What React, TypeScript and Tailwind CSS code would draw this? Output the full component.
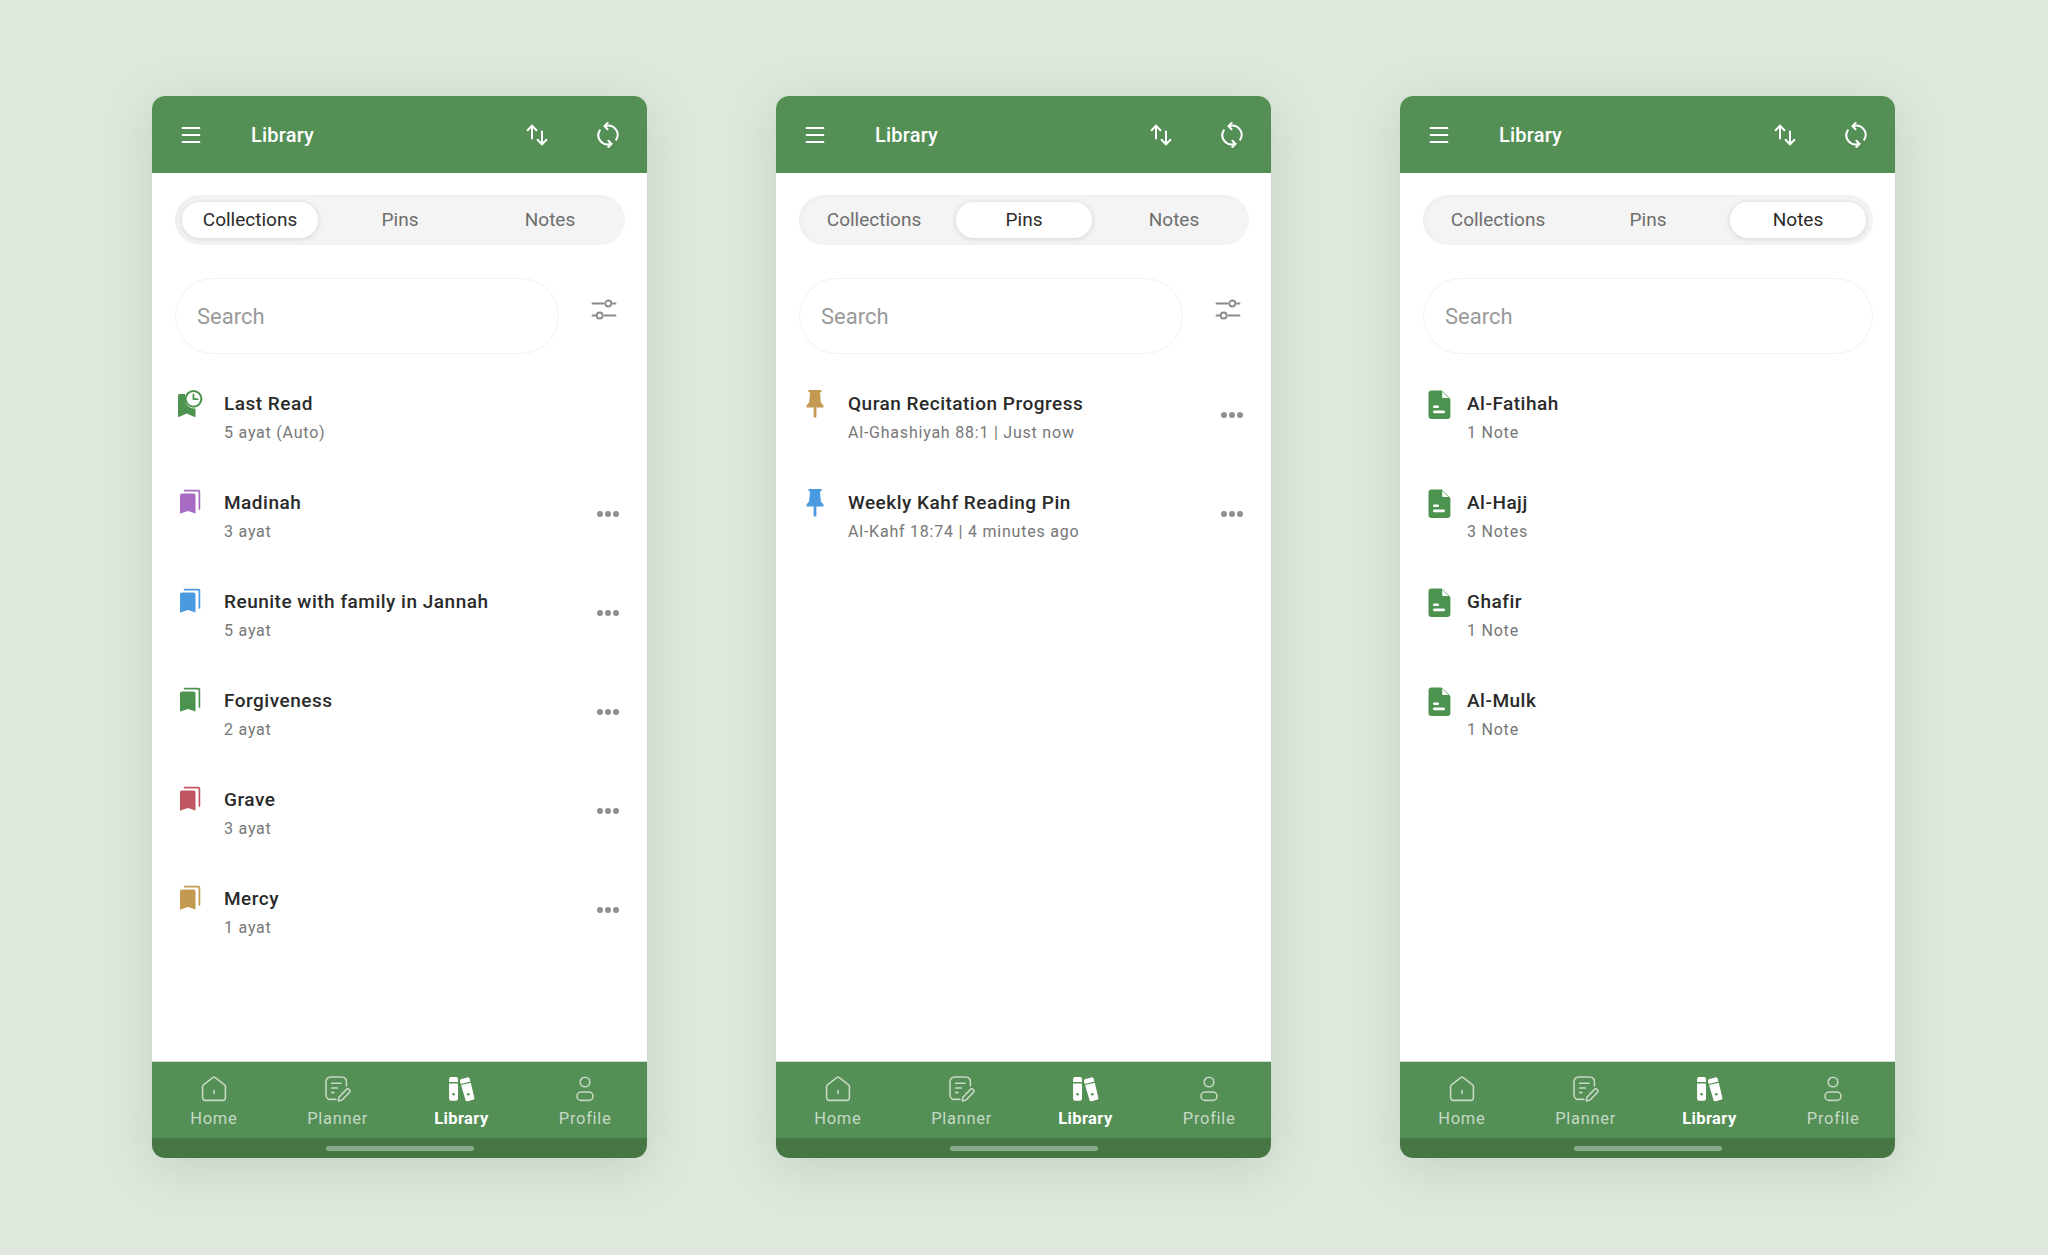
import React from "react";

type Item = { title: string; sub: string; icon: React.ReactNode; more?: boolean };

const Bookmarks = ({ color }: { color: string }) => (
  <svg width="22" height="26" viewBox="0 0 22 26" fill="none">
    <path d="M5.5 1.6H19.4a1 1 0 0 1 1 1V20" stroke={color} strokeWidth="1.7" strokeLinecap="round" />
    <path d="M1 6.5a2 2 0 0 1 2-2h11.5a2 2 0 0 1 2 2V24.6L9 22 1.4 24.6a.3.3 0 0 1-.4-.3Z" fill={color} />
  </svg>
);

const LastRead = () => (
  <svg className="-mt-[1px] -ml-[2px]" width="26" height="29" viewBox="0 0 26 29" fill="none">
    <path d="M1 6.5a1.5 1.5 0 0 1 1.5-1.5H8v6a9 9 0 0 0 10.5 8.4V27.5a.6.6 0 0 1-.9.4L9.8 24.5 1.8 28a.6.6 0 0 1-.8-.5Z" fill="#4d9350" />
    <circle cx="16.5" cy="9.8" r="7.9" stroke="#4d9350" strokeWidth="2" fill="#fff" />
    <path d="M16.5 5.4v4.8h4" stroke="#4d9350" strokeWidth="1.8" strokeLinecap="round" strokeLinejoin="round" />
  </svg>
);

const Pin = ({ color }: { color: string }) => (
  <svg className="-mt-[1px]" width="18" height="29" viewBox="0 0 18 29" fill="none">
    <path d="M2.5 1h13v2.2h-1.6l1 10.3 2.6 3v2H0.5v-2l2.6-3 1-10.3H2.5Z" fill={color} />
    <rect x="7.6" y="18" width="2.8" height="10.5" rx="1" fill={color} />
  </svg>
);

const Doc = () => (
  <svg width="23" height="29" viewBox="0 0 23 29" fill="none">
    <path d="M3.5.6h9.9a1 1 0 0 1 .7.3l8 7.9a1 1 0 0 1 .3.7v16.4a3 3 0 0 1-3 3H3.5a3 3 0 0 1-3-3V3.6a3 3 0 0 1 3-3Z" fill="#4d9350" />
    <path d="M14.2 1.8v5.1a1.2 1.2 0 0 0 1.2 1.2h5.2Z" fill="#fff" />
    <rect x="5" y="15.4" width="6" height="2.6" rx="1.2" fill="#fff" />
    <rect x="5" y="20.6" width="12" height="2.6" rx="1.2" fill="#fff" />
  </svg>
);

const Dots = () => (
  <svg width="24" height="8" viewBox="0 0 24 8" fill="#8f8f8f">
    <circle cx="4" cy="4" r="3" />
    <circle cx="12" cy="4" r="3" />
    <circle cx="20" cy="4" r="3" />
  </svg>
);

const Menu = () => (
  <svg width="20" height="18" viewBox="0 0 20 18" fill="none" stroke="#fff" strokeWidth="1.8" strokeLinecap="round">
    <path d="M1.5 2h17M1.5 9h17M1.5 16h17" />
  </svg>
);

const Sort = () => (
  <svg width="24" height="22" viewBox="0 0 24 22" fill="none" stroke="#fff" strokeWidth="2" strokeLinecap="round" strokeLinejoin="round">
    <path d="M7 14.5V2M2.6 6.3 7 1.6l4.4 4.7" />
    <path d="M17 7.5V20M12.6 15.7 17 20.4l4.4-4.7" />
  </svg>
);

const Refresh = () => (
  <svg width="24" height="26" viewBox="0 0 24 26" fill="none" stroke="#fff" strokeWidth="2" strokeLinecap="round" strokeLinejoin="round">
    <path d="M9 4.2A9.2 9.2 0 0 1 20.2 17.6" />
    <path d="M15 21.8A9.2 9.2 0 0 1 3.8 8.4" />
    <path d="M11.6 1 8.4 4.1l3.2 3.1" />
    <path d="M12.4 25l3.2-3.1-3.2-3.1" />
  </svg>
);

const Filter = () => (
  <svg width="26" height="22" viewBox="0 0 26 22" fill="none" stroke="#8a8a8a" strokeWidth="1.8" strokeLinecap="round">
    <path d="M1.5 5.5h11M21.5 5.5h3" />
    <circle cx="17.3" cy="5.5" r="3" />
    <path d="M1.5 17.5h3M13.5 17.5h11" />
    <circle cx="8.7" cy="17.5" r="3" />
  </svg>
);

const Home = () => (
  <svg width="28" height="28" viewBox="0 0 28 28" fill="none" stroke="currentColor" strokeWidth="1.6" strokeLinecap="round" strokeLinejoin="round">
    <path d="M2.6 11.3a2 2 0 0 1 .8-1.5L12.8 2.6a2 2 0 0 1 2.4 0l9.4 7.2a2 2 0 0 1 .8 1.5V23a2.6 2.6 0 0 1-2.6 2.4H5.2A2.6 2.6 0 0 1 2.6 23Z" />
    <path d="M14 15.5v3" />
  </svg>
);

const Planner = () => (
  <svg width="28" height="28" viewBox="0 0 28 28" fill="none" stroke="currentColor" strokeWidth="1.6" strokeLinecap="round" strokeLinejoin="round">
    <path d="M12 24.4H6.5A4.5 4.5 0 0 1 2 20V6.5A4.5 4.5 0 0 1 6.5 2h11.4a4.5 4.5 0 0 1 4.5 4.5V11" />
    <path d="M7.5 8.2h9.5M7.5 13h6M7.5 17.6h2.5" />
    <path d="M15 22.2 22.2 14.6a2.1 2.1 0 0 1 3.1 2.9L18 25.1l-3.6 1Z" />
  </svg>
);

const Books = () => (
  <svg width="27" height="26" viewBox="0 0 30 28.5" fill="#fff">
    <path d="M3.2 1h5.9a2 2 0 0 1 2 2v3.6H1.2V3a2 2 0 0 1 2-2Z" />
    <path d="M1.2 8.2h9.9v17a2 2 0 0 1-2 2H3.2a2 2 0 0 1-2-2Z" />
    <path d="M14.2 3.4 21.6 1.4a2 2 0 0 1 2.4 1.3l.9 3.1-10.6 2.9-.9-2.9a2 2 0 0 1 .8-2.4Z" />
    <path d="M14.6 9.9 25.3 7.2 29.3 23.9a2 2 0 0 1-1.5 2.4l-6.1 1.5a2 2 0 0 1-2.4-1.5Z" />
    <circle cx="6.2" cy="20.2" r="1.4" fill="#548f56" />
    <circle cx="22.6" cy="20.2" r="1.4" fill="#548f56" />
  </svg>
);

const Profile = () => (
  <svg width="28" height="28" viewBox="0 0 28 28" fill="none" stroke="currentColor" strokeWidth="1.6">
    <circle cx="14" cy="7" r="4.8" />
    <rect x="6" y="17" width="16" height="8.4" rx="4.2" />
  </svg>
);

const collections: Item[] = [
  { title: "Last Read", sub: "5 ayat (Auto)", icon: <LastRead /> },
  { title: "Madinah", sub: "3 ayat", icon: <Bookmarks color="#a86bc4" />, more: true },
  { title: "Reunite with family in Jannah", sub: "5 ayat", icon: <Bookmarks color="#4a9ae0" />, more: true },
  { title: "Forgiveness", sub: "2 ayat", icon: <Bookmarks color="#4d9350" />, more: true },
  { title: "Grave", sub: "3 ayat", icon: <Bookmarks color="#c0555f" />, more: true },
  { title: "Mercy", sub: "1 ayat", icon: <Bookmarks color="#c49a53" />, more: true },
];

const pins: Item[] = [
  { title: "Quran Recitation Progress", sub: "Al-Ghashiyah 88:1 | Just now", icon: <Pin color="#c49a53" />, more: true },
  { title: "Weekly Kahf Reading Pin", sub: "Al-Kahf 18:74 | 4 minutes ago", icon: <Pin color="#4a9ae0" />, more: true },
];

const notes: Item[] = [
  { title: "Al-Fatihah", sub: "1 Note", icon: <Doc /> },
  { title: "Al-Hajj", sub: "3 Notes", icon: <Doc /> },
  { title: "Ghafir", sub: "1 Note", icon: <Doc /> },
  { title: "Al-Mulk", sub: "1 Note", icon: <Doc /> },
];

const tabs = ["Collections", "Pins", "Notes"];

const Phone = ({
  active,
  items,
  showFilter,
  iconSlot,
}: {
  active: string;
  items: Item[];
  showFilter: boolean;
  iconSlot: string;
}) => (
  <div className="flex h-[1062px] w-[495px] flex-col overflow-hidden rounded-[13px] bg-white shadow-[0_10px_50px_rgba(60,90,60,0.16)]">
    <header className="flex h-[77px] shrink-0 items-center bg-[#548f56] text-white">
      <div className="flex w-[99px] pl-[29px]">
        <Menu />
      </div>
      <h1 className="flex-1 text-[20px] font-medium tracking-[0.2px]">Library</h1>
      <div className="mr-[27px] flex items-center gap-[47px]">
        <Sort />
        <Refresh />
      </div>
    </header>

    <div className="mt-[22px] flex h-[50px] shrink-0 pr-[22px] pl-[23px]">
      <div className="flex w-full rounded-full bg-[#f4f4f4] shadow-[inset_2px_1px_5px_rgba(0,0,0,0.03)]">
        {tabs.map((t) => (
          <div key={t} className="flex flex-1 items-center justify-center">
            <span
              className={
                t === active
                  ? "flex h-[36px] w-[136px] items-center justify-center rounded-full bg-white text-[19px] text-[#2b2b2b] shadow-[0_1px_6px_rgba(0,0,0,0.13)]"
                  : "flex h-[36px] w-[136px] items-center justify-center text-[19px] text-[#6e6e6e]"
              }
            >
              {t}
            </span>
          </div>
        ))}
      </div>
    </div>

    <div className="mt-[33px] flex h-[76px] shrink-0 items-start pr-[22px] pl-[23px]">
      <div className="flex h-[76px] flex-1 items-center rounded-full border border-[#f1f1f1] pt-[1px] pl-[21px] text-[22px] text-[#9a9a9a]">
        Search
      </div>
      {showFilter && (
        <div className="mt-[20px] mr-[8px] ml-[32px] flex">
          <Filter />
        </div>
      )}
    </div>

    <div className="mt-[13px] flex min-h-0 flex-1 flex-col">
      {items.map((it) => (
        <div key={it.title} className="flex h-[99px] shrink-0 pr-[27px] pl-[23px]">
          <div className={iconSlot + " mt-[23px] shrink-0"}>{it.icon}</div>
          <div className="flex flex-1 flex-col justify-center pt-[2px]">
            <div className="text-[19px] leading-[29px] font-medium tracking-[0.5px] text-[#2a2a2a]">{it.title}</div>
            <div className="text-[16px] leading-[29px] tracking-[0.78px] text-[#777777]">{it.sub}</div>
          </div>
          {it.more && (
            <div className="flex items-center pb-[3px]">
              <Dots />
            </div>
          )}
        </div>
      ))}
    </div>

    <nav className="grid h-[77px] shrink-0 grid-cols-4 border-t border-[#cfe0cf] bg-[#548f56] text-[#c4d9c5]">
      {[
        { label: "Home", icon: <Home /> },
        { label: "Planner", icon: <Planner /> },
        { label: "Library", icon: <Books />, on: true },
        { label: "Profile", icon: <Profile /> },
      ].map((n) => (
        <div key={n.label} className="flex flex-col items-center pt-[12px]">
          <div className="flex h-[29px] items-center">{n.icon}</div>
          <div
            className={
              n.on
                ? "mt-[5px] text-[16.5px] leading-[22px] font-bold tracking-[0.4px] text-white"
                : "mt-[5px] text-[16.5px] leading-[22px] tracking-[0.7px]"
            }
          >
            {n.label}
          </div>
        </div>
      ))}
    </nav>
    <div className="flex h-[20px] shrink-0 items-start justify-center bg-[#467644] pt-[8px]">
      <div className="h-[5px] w-[148px] rounded-full bg-[#8aa98a]" />
    </div>
  </div>
);

export default function App() {
  return (
    <div
      className="flex min-h-screen justify-center gap-[129px] bg-[#dfe8dd] pt-[96px] pr-[1px]"
      style={{ fontFamily: "Roboto, 'Noto Sans', sans-serif" }}
    >
      <Phone active="Collections" items={collections} showFilter iconSlot="w-[49px] pl-[4px]" />
      <Phone active="Pins" items={pins} showFilter iconSlot="w-[49px] pl-[7px]" />
      <Phone active="Notes" items={notes} showFilter={false} iconSlot="w-[44px] pl-[5px]" />
    </div>
  );
}
